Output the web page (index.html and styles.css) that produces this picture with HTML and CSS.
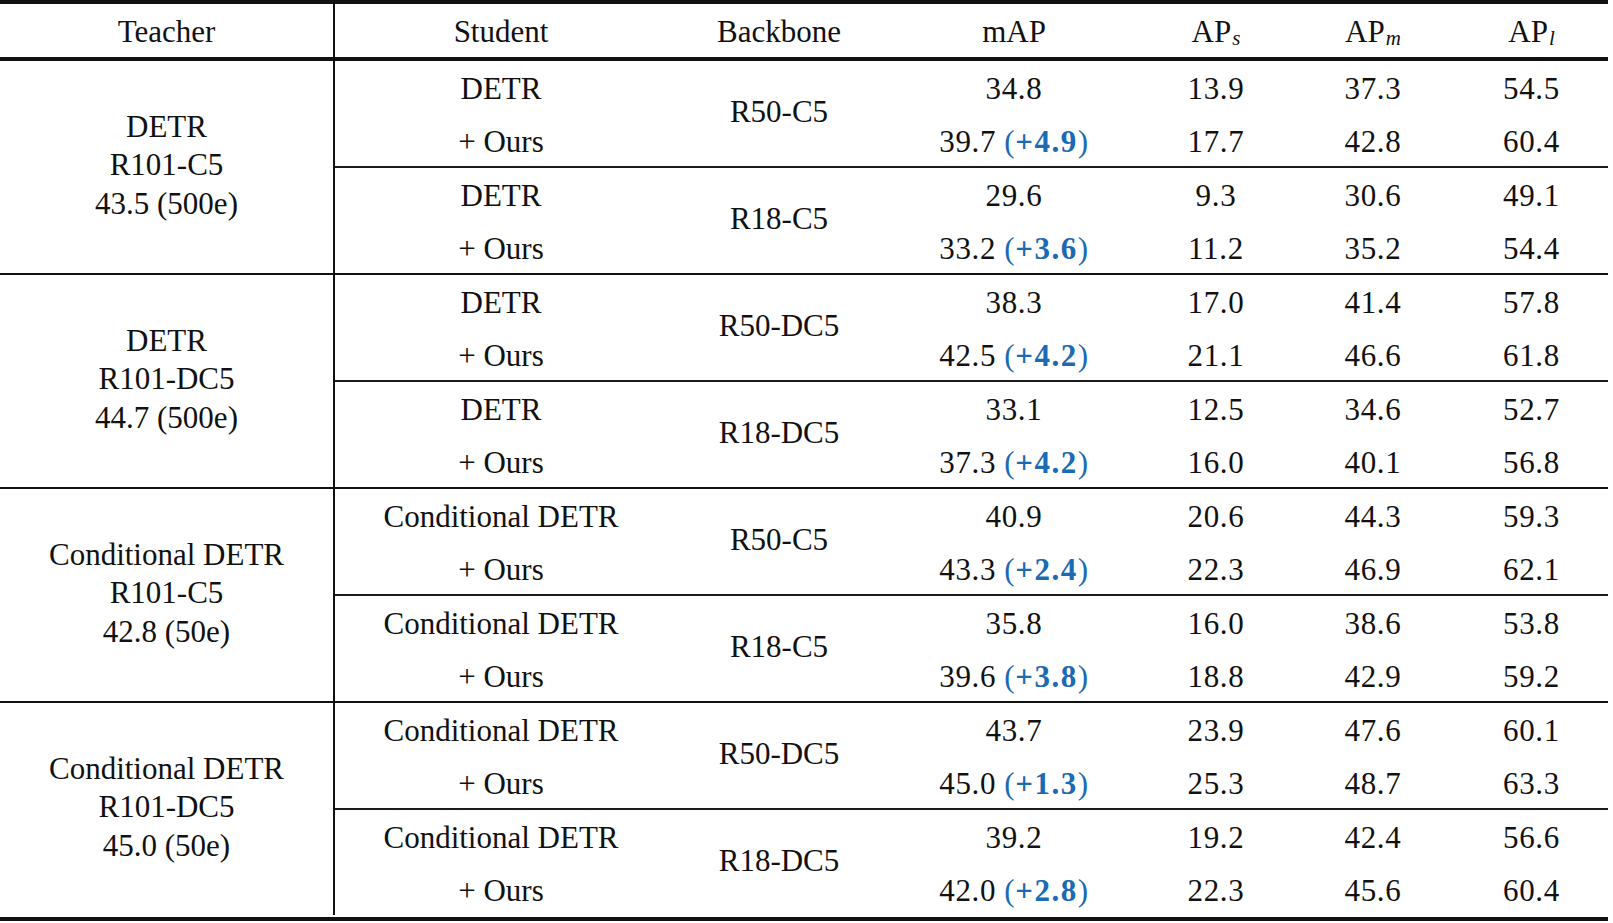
FILE: index.html
```html
<!DOCTYPE html>
<html>
<head>
<meta charset="utf-8">
<link rel="stylesheet" href="styles.css">
</head>
<body>
<div class="table">
  <div class="head">
    <div class="hc teach">Teacher</div>
    <div class="hc">Student</div>
    <div class="hc">Backbone</div>
    <div class="hc">mAP</div>
    <div class="hc">AP<span class="sub">s</span></div>
    <div class="hc">AP<span class="sub">m</span></div>
    <div class="hc">AP<span class="sub">l</span></div>
  </div>

  <div class="group">
    <div class="teacher">DETR<br>R101-C5<br>43.5 (500e)</div>
    <div class="subs">
      <div class="sg">
        <div class="c">DETR</div><div class="c bb">R50-C5</div><div class="c">34.8</div><div class="c">13.9</div><div class="c">37.3</div><div class="c">54.5</div>
        <div class="c">+ Ours</div><div class="c">39.7 <span class="gain">(<b>+4.9</b>)</span></div><div class="c">17.7</div><div class="c">42.8</div><div class="c">60.4</div>
      </div>
      <div class="sg">
        <div class="c">DETR</div><div class="c bb">R18-C5</div><div class="c">29.6</div><div class="c">9.3</div><div class="c">30.6</div><div class="c">49.1</div>
        <div class="c">+ Ours</div><div class="c">33.2 <span class="gain">(<b>+3.6</b>)</span></div><div class="c">11.2</div><div class="c">35.2</div><div class="c">54.4</div>
      </div>
    </div>
  </div>

  <div class="group">
    <div class="teacher">DETR<br>R101-DC5<br>44.7 (500e)</div>
    <div class="subs">
      <div class="sg">
        <div class="c">DETR</div><div class="c bb">R50-DC5</div><div class="c">38.3</div><div class="c">17.0</div><div class="c">41.4</div><div class="c">57.8</div>
        <div class="c">+ Ours</div><div class="c">42.5 <span class="gain">(<b>+4.2</b>)</span></div><div class="c">21.1</div><div class="c">46.6</div><div class="c">61.8</div>
      </div>
      <div class="sg">
        <div class="c">DETR</div><div class="c bb">R18-DC5</div><div class="c">33.1</div><div class="c">12.5</div><div class="c">34.6</div><div class="c">52.7</div>
        <div class="c">+ Ours</div><div class="c">37.3 <span class="gain">(<b>+4.2</b>)</span></div><div class="c">16.0</div><div class="c">40.1</div><div class="c">56.8</div>
      </div>
    </div>
  </div>

  <div class="group">
    <div class="teacher">Conditional DETR<br>R101-C5<br>42.8 (50e)</div>
    <div class="subs">
      <div class="sg">
        <div class="c">Conditional DETR</div><div class="c bb">R50-C5</div><div class="c">40.9</div><div class="c">20.6</div><div class="c">44.3</div><div class="c">59.3</div>
        <div class="c">+ Ours</div><div class="c">43.3 <span class="gain">(<b>+2.4</b>)</span></div><div class="c">22.3</div><div class="c">46.9</div><div class="c">62.1</div>
      </div>
      <div class="sg">
        <div class="c">Conditional DETR</div><div class="c bb">R18-C5</div><div class="c">35.8</div><div class="c">16.0</div><div class="c">38.6</div><div class="c">53.8</div>
        <div class="c">+ Ours</div><div class="c">39.6 <span class="gain">(<b>+3.8</b>)</span></div><div class="c">18.8</div><div class="c">42.9</div><div class="c">59.2</div>
      </div>
    </div>
  </div>

  <div class="group last">
    <div class="teacher">Conditional DETR<br>R101-DC5<br>45.0 (50e)</div>
    <div class="subs">
      <div class="sg">
        <div class="c">Conditional DETR</div><div class="c bb">R50-DC5</div><div class="c">43.7</div><div class="c">23.9</div><div class="c">47.6</div><div class="c">60.1</div>
        <div class="c">+ Ours</div><div class="c">45.0 <span class="gain">(<b>+1.3</b>)</span></div><div class="c">25.3</div><div class="c">48.7</div><div class="c">63.3</div>
      </div>
      <div class="sg">
        <div class="c">Conditional DETR</div><div class="c bb">R18-DC5</div><div class="c">39.2</div><div class="c">19.2</div><div class="c">42.4</div><div class="c">56.6</div>
        <div class="c">+ Ours</div><div class="c">42.0 <span class="gain">(<b>+2.8</b>)</span></div><div class="c">22.3</div><div class="c">45.6</div><div class="c">60.4</div>
      </div>
    </div>
  </div>
</div>
</body>
</html>
```
FILE: styles.css
```css
html, body {
  margin: 0;
  padding: 0;
  background: #ffffff;
}

body {
  font-family: "Liberation Serif", "Times New Roman", serif;
  font-size: 31px;
  color: #111;
}

.table {
  width: 1608px;
  border-top: 4px solid #111;
  border-bottom: 4px solid #111;
}

.head {
  display: grid;
  grid-template-columns: 335px 332px 224px 246px 158px 156px 157px;
  height: 53px;
  border-bottom: 4px solid #111;
}

.hc {
  display: flex;
  align-items: center;
  justify-content: center;
  white-space: nowrap;
  padding-top: 2px;
}

.hc.teach {
  border-right: 2px solid #111;
}

.hc:last-child {
  padding-left: 4px;
}

.sub {
  font-style: italic;
  font-size: 21px;
  position: relative;
  top: 7px;
  margin-left: 1px;
}

.group {
  display: grid;
  grid-template-columns: 335px 1273px;
  border-bottom: 2px solid #111;
}

.group.last {
  border-bottom: none;
  padding-bottom: 2px;
}

.teacher {
  border-right: 2px solid #111;
  display: flex;
  align-items: center;
  justify-content: center;
  text-align: center;
  line-height: 38.5px;
  padding-bottom: 3px;
}

.subs {
  display: flex;
  flex-direction: column;
}

.sg {
  display: grid;
  grid-template-columns: 332px 224px 246px 158px 156px 157px;
  grid-template-rows: 53px 52px;
}

.sg:first-child {
  border-bottom: 2px solid #1a1a1a;
}

.c {
  display: flex;
  align-items: center;
  justify-content: center;
  white-space: nowrap;
  padding-top: 3px;
}

.sg > .c:not(:nth-child(1)):not(:nth-child(2)):not(:nth-child(7)) {
  letter-spacing: 0.7px;
}

.sg > .c:nth-child(6),
.sg > .c:nth-child(11) {
  padding-left: 4px;
}

.c.bb {
  grid-column: 2;
  grid-row: 1 / span 2;
  padding-top: 0;
  padding-bottom: 4px;
}

.gain {
  color: #1b6ab2;
  margin-left: 8px;
}

.gain b {
  font-weight: bold;
  letter-spacing: 1.5px;
}
```
